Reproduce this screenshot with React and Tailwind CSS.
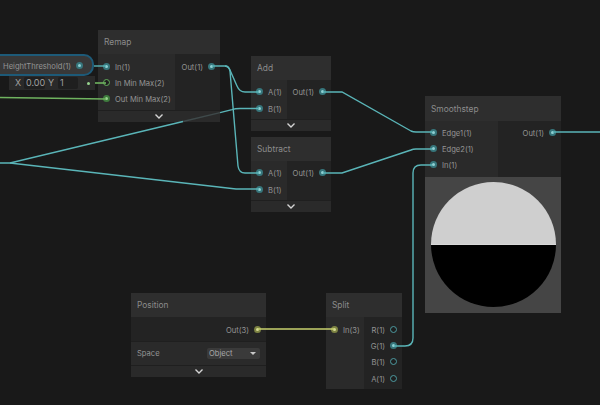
const teal = "#5ab5b8"

function Port({ open, color = "teal" }) {
  const ring = color === "teal" ? "border-[#4d9aa0]" : color === "green" ? "border-[#63ad5c]" : "border-[#b5bd62]"
  const fill = color === "teal" ? "bg-[#37767c]" : color === "green" ? "bg-[#3f7c3e]" : "bg-[#7d8343]"
  const dot = color === "teal" ? "bg-[#8fd0d3]" : color === "green" ? "bg-[#98d48f]" : "bg-[#d5da94]"
  if (open) {
    return <span className={`block size-[7px] shrink-0 rounded-full border ${ring} bg-[#1e1e1e]`} />
  }
  return (
    <span className={`flex size-[7px] shrink-0 items-center justify-center rounded-full ${fill}`}>
      <span className={`block size-[3px] rounded-full ${dot}`} />
    </span>
  )
}

function Chevron() {
  return (
    <svg width="10" height="7" viewBox="0 0 10 7" fill="none" stroke="#d4d4d4" strokeWidth="1.4">
      <path d="M1.5 1.5 5 5 8.5 1.5" />
    </svg>
  )
}

function InRow({ label, open, color }) {
  return (
    <div className="flex h-[16.4px] items-center gap-[5px] pl-[5px] whitespace-nowrap">
      <Port open={open} color={color} />
      <span className="pt-[2px]">{label}</span>
    </div>
  )
}

function OutRow({ label, open, color }) {
  return (
    <div className="flex h-[16.4px] items-center justify-end gap-[5px] pr-[5px] whitespace-nowrap">
      <span className="pt-[2px]">{label}</span>
      <Port open={open} color={color} />
    </div>
  )
}

function Header({ title, height }) {
  return (
    <div className={`flex items-center bg-[#2e2e2e] pt-[1px] pl-[6px] text-[8.4px] text-[#8c8c8c] ${height}`}>
      {title}
    </div>
  )
}

function Footer() {
  return (
    <div className="flex h-[12px] items-center justify-center border-t border-[#1f1f1f] bg-[#2a2a2a]">
      <Chevron />
    </div>
  )
}

function Node({ className, title, headerHeight = "h-[24px]", children }) {
  return (
    <div className={`absolute flex flex-col bg-[#232323] text-[7.6px] text-[#949494] ${className}`}>
      <Header title={title} height={headerHeight} />
      {children}
    </div>
  )
}

function Wires() {
  return (
    <svg className="pointer-events-none absolute inset-0 z-10" width="600" height="405" fill="none" strokeWidth="1.4">
      <g stroke={teal}>
        <path d="M94 66 H106" />
        <path d="M212 66 H225 Q228 66 229.5 69 L237 86 Q239.5 92 245 92 H259" />
        <path d="M225 66 Q229 66 230 71 L238 166 Q239 173 245 173 H259" />
        <path d="M0 163 H10 L183 121.5" />
        <path d="M220 112.6 L232 109.7 Q235 108.5 240 108.5 H259" />
        <path d="M10 163 L236 189 H259" />
        <path d="M323 92 H342 L411 131 Q413 132 416 132 H432" />
        <path d="M323 173 H342 L411 150 Q413 149 416 149 H432" />
        <path d="M394 346 H405 Q413 346 413 338 V173 Q413 165 421 165 H432" />
        <path d="M553 132 H600" />
      </g>
      <path d="M183 121.5 L220 112.6" stroke="#3f4a4b" />
      <path d="M0 97.5 L106 99" stroke="#6fb35f" strokeWidth="1.6" />
      <path d="M95 83 H106" stroke="#6fb35f" strokeWidth="1.6" />
      <path d="M258 329 H334" stroke="#c9d26e" />
    </svg>
  )
}

export default function App() {
  return (
    <div
      className="relative h-[405px] w-[600px] overflow-hidden bg-[#191919]"
      style={{ fontFamily: "Inter, 'Liberation Sans', sans-serif" }}
    >
      {/* property pill + inline inputs */}
      <div className="absolute top-[54px] left-[-20px] flex h-[22px] w-[114px] items-center gap-[5px] rounded-r-[10px] border-2 border-[#1d5a78] bg-[#383838] pl-[21px] text-[7.6px] whitespace-nowrap text-[#949494]">
        <span className="pt-[3px]">HeightThreshold(1)</span>
        <Port />
      </div>
      <div className="absolute top-[76px] left-[9px] flex h-[14px] w-[86px] items-center bg-[#2a2a2a] pl-[6px] text-[9px] text-[#a0a0a0]">
        <span className="w-[9px]">X</span>
        <span className="h-[12px] w-[21px] overflow-hidden rounded-[2px] bg-[#1f1f1f] pl-[2px] leading-[12px] whitespace-nowrap">0.00</span>
        <span className="ml-[3px] w-[10px]">Y</span>
        <span className="h-[12px] w-[20px] rounded-[2px] bg-[#1f1f1f] pl-[2px] leading-[12px]">1</span>
        <span className="ml-[9px] size-[3px] rounded-full bg-[#98d48f]" />
      </div>

      <Node className="top-[30px] left-[98px] h-[92px] w-[122px]" title="Remap">
        <div className="flex h-[56px]">
          <div className="w-[77px] bg-[#2a2a2a] pt-[4px]">
            <InRow label="In(1)" />
            <InRow label="In Min Max(2)" open color="green" />
            <InRow label="Out Min Max(2)" color="green" />
          </div>
          <div className="flex-1 pt-[4px]">
            <OutRow label="Out(1)" />
          </div>
        </div>
        <Footer />
      </Node>

      <Node className="top-[56px] left-[251px] h-[75px] w-[80px]" title="Add">
        <div className="flex h-[40px]">
          <div className="w-[36px] bg-[#2a2a2a] pt-[4px]">
            <InRow label="A(1)" />
            <InRow label="B(1)" />
          </div>
          <div className="flex-1 pt-[4px]">
            <OutRow label="Out(1)" />
          </div>
        </div>
        <Footer />
      </Node>

      <Node className="top-[137px] left-[251px] h-[75px] w-[80px]" title="Subtract">
        <div className="flex h-[40px]">
          <div className="w-[36px] bg-[#2a2a2a] pt-[4px]">
            <InRow label="A(1)" />
            <InRow label="B(1)" />
          </div>
          <div className="flex-1 pt-[4px]">
            <OutRow label="Out(1)" />
          </div>
        </div>
        <Footer />
      </Node>

      <Node className="top-[96px] left-[425px] h-[217px] w-[136px]" title="Smoothstep" headerHeight="h-[25px]">
        <div className="flex h-[56px]">
          <div className="w-[73px] bg-[#2a2a2a] pt-[3px]">
            <InRow label="Edge1(1)" />
            <InRow label="Edge2(1)" />
            <InRow label="In(1)" />
          </div>
          <div className="flex-1 pt-[3px]">
            <OutRow label="Out(1)" />
          </div>
        </div>
        <div className="flex flex-1 items-center justify-center bg-[#454545] pb-[1px]">
          <div className="flex size-[125px] flex-col overflow-hidden rounded-full">
            <div className="h-[63px] border-b border-[#d8d8d8] bg-[#cfcfcf]" />
            <div className="flex-1 bg-black" />
          </div>
        </div>
      </Node>

      <Node className="top-[293px] left-[131px] h-[84px] w-[135px]" title="Position">
        <div className="flex h-[24px] items-start pt-[4px]">
          <div className="flex-1">
            <OutRow label="Out(3)" color="yellow" />
          </div>
        </div>
        <div className="flex h-[24px] items-center justify-between border-t border-[#1f1f1f] bg-[#2a2a2a] pr-[6px] pl-[6px]">
          <span>Space</span>
          <div className="flex h-[11px] w-[53px] items-center justify-between rounded-[2px] bg-[#3a3a3a] pr-[4px] pl-[2px] text-[#a8a8a8]">
            <span>Object</span>
            <span className="h-0 w-0 border-x-[3px] border-t-[3px] border-x-transparent border-t-[#c8c8c8]" />
          </div>
        </div>
        <Footer />
      </Node>

      <Node className="top-[293px] left-[326px] h-[96px] w-[76px]" title="Split">
        <div className="flex flex-1">
          <div className="w-[38px] bg-[#2a2a2a] pt-[4px]">
            <InRow label="In(3)" color="yellow" />
          </div>
          <div className="flex-1 pt-[4px]">
            <OutRow label="R(1)" open />
            <OutRow label="G(1)" />
            <OutRow label="B(1)" open />
            <OutRow label="A(1)" open />
          </div>
        </div>
      </Node>

      <Wires />
    </div>
  )
}
